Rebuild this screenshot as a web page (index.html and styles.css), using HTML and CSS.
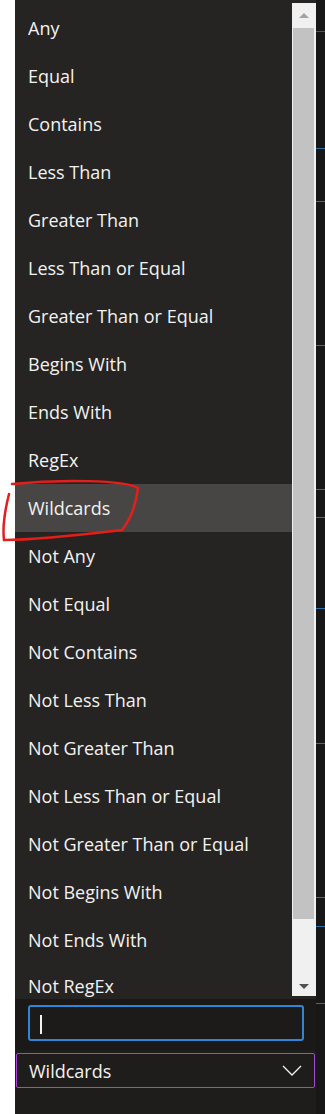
FILE: index.html
```html
<!DOCTYPE html>
<html lang="en">

<head>
    <meta charset="UTF-8">
    <meta name="viewport" content="width=device-width, initial-scale=1.0">
    <title>Filter</title>
    <link rel="stylesheet" href="styles.css">
</head>

<body>
    <div class="shell">
        <div class="main">
            <!-- dropdown popup -->
            <div class="popup">
                <div class="listbox">
                    <ul class="list">
                        <li>Any</li>
                        <li>Equal</li>
                        <li>Contains</li>
                        <li>Less Than</li>
                        <li>Greater Than</li>
                        <li>Less Than or Equal</li>
                        <li>Greater Than or Equal</li>
                        <li>Begins With</li>
                        <li>Ends With</li>
                        <li>RegEx</li>
                        <li class="on">Wildcards
                            <!-- hand-drawn mark -->
                            <svg class="mark" width="150" height="80" viewBox="0 0 150 80">
                                <path d="M9 20 C6 32 2 50 4 66 C30 66 80 61 122 56 C130 46 136 30 138 14 C125 6 60 5 12 10"
                                    fill="none" stroke="#e41e1a" stroke-width="2.5" stroke-linecap="round" />
                            </svg>
                        </li>
                        <li>Not Any</li>
                        <li>Not Equal</li>
                        <li>Not Contains</li>
                        <li>Not Less Than</li>
                        <li>Not Greater Than</li>
                        <li>Not Less Than or Equal</li>
                        <li>Not Greater Than or Equal</li>
                        <li>Not Begins With</li>
                        <li>Not Ends With</li>
                        <li>Not RegEx</li>
                    </ul>
                    <div class="bar">
                        <div class="arrow up"></div>
                        <div class="thumb"></div>
                        <div class="arrow down"></div>
                    </div>
                </div>
                <div class="search">
                    <div class="input"><span class="caret"></span></div>
                </div>
            </div>
            <!-- selected value -->
            <div class="select">
                <span>Wildcards</span>
                <svg width="20" height="11" viewBox="0 0 20 11">
                    <path d="M1 1 L10 10 L19 1" fill="none" stroke="#f3f2f1" stroke-width="1.3" />
                </svg>
            </div>
        </div>
        <!-- what shows behind the popup -->
        <div class="edge">
            <i class="grey" style="margin-top:31px"></i>
            <i style="margin-top:116px"></i>
            <i style="margin-top:52px"></i>
            <i style="margin-top:143px"></i>
            <i style="margin-top:143px"></i>
            <i style="margin-top:27px"></i>
            <i style="margin-top:90px"></i>
            <i style="margin-top:134px"></i>
            <i style="margin-top:153px"></i>
            <i style="margin-top:28px"></i>
            <i style="margin-top:76px"></i>
        </div>
    </div>
</body>

</html>
```

FILE: styles.css
```css
* {
    box-sizing: border-box;
}

body {
    margin: 0;
    background: #fff;
    font-family: "Open Sans", "Noto Sans", sans-serif;
}

.shell {
    display: flex;
    margin-left: 15px;
    height: 1114px;
    background: #1e1d1c;
}

.main {
    width: 301px;
}

/* 弹出列表 */
.listbox {
    display: flex;
    height: 999px;
    background: #252423;
}

.list {
    width: 277px;
    margin: 0;
    padding: 4px 0 0;
    list-style: none;
}

.list li {
    height: 48px;
    line-height: 48px;
    padding-left: 13px;
    font-size: 18px;
    color: #f3f2f1;
    white-space: nowrap;
}

.list li:last-child {
    line-height: 44px;
    height: 43px;
    overflow: hidden;
}

.list li.on {
    position: relative;
    background: #484644;
}

/* 红圈标注 */
.mark {
    position: absolute;
    left: -15px;
    top: -10px;
}

/* 滚动条 */
.bar {
    width: 24px;
    margin: 3px 0;
    padding: 0 2px 0 1px;
    display: flex;
    flex-direction: column;
    background: #f0f0f0;
}

.thumb {
    height: 891px;
    background: #c2c2c2;
}

.arrow {
    height: 25px;
    display: flex;
    align-items: center;
    justify-content: center;
}

.arrow::before {
    content: "";
    border-left: 5px solid transparent;
    border-right: 5px solid transparent;
}

.arrow.up::before {
    border-bottom: 5px solid #a3a3a3;
}

.arrow.down {
    flex: 1;
    align-items: flex-end;
    padding-bottom: 7px;
}

.arrow.down::before {
    border-top: 5px solid #505050;
}

/* 搜索框 */
.search {
    height: 51px;
    padding: 6px 12px 0 13px;
    background: #1a1918;
}

.input {
    height: 36px;
    border: 2px solid #2f86d8;
    border-radius: 3px;
    background: #1c1b1a;
    padding: 8px 10px;
}

.caret {
    display: block;
    width: 2px;
    height: 19px;
    background: #f3f2f1;
}

/* 已选值 */
.select {
    margin: 3px 0 0 1px;
    width: 299px;
    height: 35px;
    border: 1px solid #a845d0;
    border-radius: 2px;
    display: flex;
    align-items: center;
    justify-content: space-between;
    padding: 0 12px 0 12px;
    font-size: 18px;
    color: #f3f2f1;
}

/* 背景边缘 */
.edge {
    flex: 1;
    display: flex;
    flex-direction: column;
    background: #171717;
}

.edge i {
    display: block;
    height: 1px;
    background: #2b6ea8;
}

.edge i.grey {
    background: #555;
}
```
